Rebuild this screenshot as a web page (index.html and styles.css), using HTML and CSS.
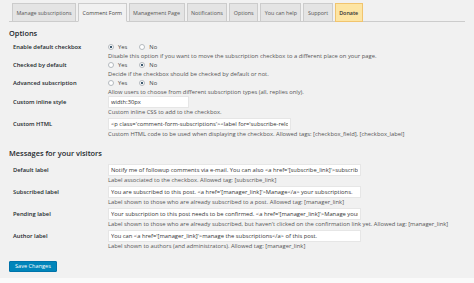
FILE: index.html
```html
<!doctype html>
<html>
<head>
	<title>Comment Form - Subscribe to Comments</title>
	<link rel="stylesheet" href="styles.css">
</head>
<body>
<div class="wrap">
	<nav class="tabs">
		<a class="tab">Manage subscriptions</a>
		<a class="tab active">Comment Form</a>
		<a class="tab">Management Page</a>
		<a class="tab">Notifications</a>
		<a class="tab">Options</a>
		<a class="tab">You can help</a>
		<a class="tab">Support</a>
		<a class="tab donate">Donate</a>
	</nav>

	<h3 class="section-title first">Options</h3>

	<div class="row radio-row">
		<div class="th">Enable default checkbox</div>
		<div class="td">
			<div class="choices">
				<label><input type="radio" name="enable" checked>Yes</label>
				<label><input type="radio" name="enable">No</label>
			</div>
			<div class="desc">Disable this option if you want to move the subscription checkbox to a different place on your page.</div>
		</div>
	</div>
	<div class="row radio-row">
		<div class="th">Checked by default</div>
		<div class="td">
			<div class="choices">
				<label><input type="radio" name="checked">Yes</label>
				<label><input type="radio" name="checked" checked>No</label>
			</div>
			<div class="desc">Decide if the checkbox should be checked by default or not.</div>
		</div>
	</div>
	<div class="row radio-row">
		<div class="th">Advanced subscription</div>
		<div class="td">
			<div class="choices">
				<label><input type="radio" name="advanced">Yes</label>
				<label><input type="radio" name="advanced" checked>No</label>
			</div>
			<div class="desc">Allow users to choose from different subscription types (all, replies only).</div>
		</div>
	</div>
	<div class="row text-row">
		<div class="th">Custom inline style</div>
		<div class="td">
			<input class="field short" type="text" value="width:30px">
			<div class="desc">Custom inline CSS to add to the checkbox.</div>
		</div>
	</div>
	<div class="row text-row">
		<div class="th">Custom HTML</div>
		<div class="td">
			<input class="field mid" type="text" value="&lt;p class='comment-form-subscriptions'&gt;&lt;label for='subscribe-reloaded'&gt;[checkbox_field] [checkbox_label]&lt;/label&gt;&lt;/p&gt;">
			<div class="desc">Custom HTML code to be used when displaying the checkbox. Allowed tags: [checkbox_field], [checkbox_label]</div>
		</div>
	</div>

	<h3 class="section-title">Messages for your visitors</h3>

	<div class="row text-row">
		<div class="th">Default label</div>
		<div class="td">
			<input class="field long" type="text" value="Notify me of followup comments via e-mail. You can also &lt;a href='[subscribe_link]'&gt;subscribe&lt;/a&gt; without commenting.">
			<div class="desc">Label associated to the checkbox. Allowed tag: [subscribe_link]</div>
		</div>
	</div>
	<div class="row text-row">
		<div class="th">Subscribed label</div>
		<div class="td">
			<input class="field long" type="text" value="You are subscribed to this post. &lt;a href='[manager_link]'&gt;Manage&lt;/a&gt; your subscriptions.">
			<div class="desc">Label shown to those who are already subscribed to a post. Allowed tag: [manager_link]</div>
		</div>
	</div>
	<div class="row text-row">
		<div class="th">Pending label</div>
		<div class="td">
			<input class="field long" type="text" value="Your subscription to this post needs to be confirmed. &lt;a href='[manager_link]'&gt;Manage your subscriptions&lt;/a&gt;.">
			<div class="desc">Label shown to those who are already subscribed, but haven't clicked on the confirmation link yet. Allowed tag: [manager_link]</div>
		</div>
	</div>
	<div class="row text-row">
		<div class="th">Author label</div>
		<div class="td">
			<input class="field long" type="text" value="You can &lt;a href='[manager_link]'&gt;manage the subscriptions&lt;/a&gt; of this post.">
			<div class="desc">Label shown to authors (and administrators). Allowed tag: [manager_link]</div>
		</div>
	</div>

	<p class="submit"><button class="button-primary" type="submit">Save Changes</button></p>
</div>
<div class="footer"></div>
</body>
</html>
```

FILE: styles.css
```css
html, body {height: 100%;}
body {margin: 0; background: #f1f1f1; font-family: "Open Sans", "Noto Sans", sans-serif; font-size: 5.8px; color: #444; display: flex; flex-direction: column;}
.wrap {padding: 3px 9px 0; flex: none;}

/* tabs */
.tabs {display: flex; gap: 2px; padding-left: 3px; border-bottom: 1px solid #ccc;}
.tab {height: 19px; line-height: 18px; padding: 0 3.5px; margin-bottom: -1px; box-sizing: border-box; border: 1px solid #ccc; background: #e4e4e4; color: #555; font-size: 5.4px; white-space: nowrap;}
.tab.active {background: #f1f1f1; border-bottom-color: #f1f1f1; color: #444;}
.tab.donate {background: #fde5a3; border-color: #f1c46e; color: #333; font-weight: 600;}

/* headings */
.section-title {margin: 8px 0 6px; font-size: 7.4px; line-height: 10px; font-weight: 600; color: #23282d;}
.section-title.first {margin: 6px 0 4px;}

/* rows */
.row {display: grid; grid-template-columns: 95px 1fr; padding-left: 4px;}
.th {font-weight: 600; color: #23282d; line-height: 10px;}
.radio-row {height: 18px;}
.text-row {padding-bottom: 2px;}
.text-row .th {padding-top: 1px;}
.desc {line-height: 8px; color: #555; white-space: nowrap;}

.choices {display: flex; gap: 12px; height: 10px; align-items: center;}
.choices label {display: flex; align-items: center; color: #444;}
.choices input {appearance: none; -webkit-appearance: none; width: 6px; height: 6px; margin: 0 4px 0 0; border: 1px solid #b4b9be; border-radius: 50%; background: #fff; box-sizing: border-box;}
.choices input:checked {background: radial-gradient(circle, #3d5a70 0, #3d5a70 1px, #fff 1.6px);}

.field {display: block; height: 12px; box-sizing: border-box; margin: 0; padding: 0 2px; border: 1px solid #e6e6e6; background: #fff; font-family: inherit; font-size: 5.8px; color: #333; outline: none;}
.field.short {width: 81px;}
.field.mid {width: 183px;}
.field.long {width: 253px;}

.submit {margin: 9px 0 0;}
.button-primary {height: 11px; padding: 0 5px; border: 1px solid #0073aa; border-radius: 1px; background: #0085ba; color: #fff; font-family: inherit; font-size: 5.6px; line-height: 9px;}

.footer {flex: 1; margin-top: 6px; background: #fafafa;}
```
